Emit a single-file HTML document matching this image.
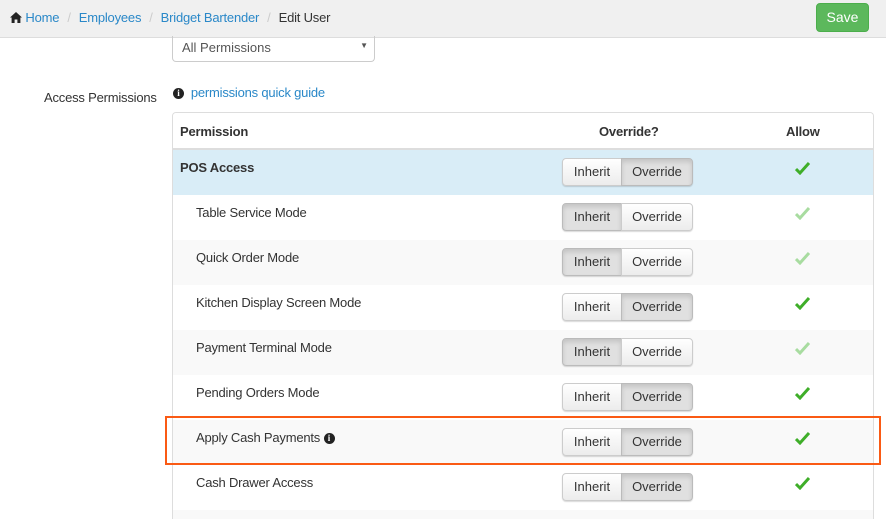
<!DOCTYPE html>
<html><head><meta charset="utf-8"><style>
*{box-sizing:border-box;margin:0;padding:0}
html,body{overflow:hidden;height:519px}
body{width:886px;background:#fff;font-family:"Liberation Sans",sans-serif;font-size:13px;color:#333;position:relative}
.hdr{position:absolute;left:0;top:0;width:886px;height:38px;background:#f0f0f0;border-bottom:1px solid #ddd}
.bc{position:absolute;left:10px;top:10px;font-size:13px;letter-spacing:-0.2px}
.bc a{color:#2a88c8;text-decoration:none}
.bc .s{color:#ccc;margin:0 8px}
.save{position:absolute;left:816px;top:3px;width:53px;height:29px;background:#5cb85c;border:1px solid #4cae4c;border-radius:4px;color:#fff;font-size:14px;text-align:center;line-height:27px}
.sel{position:absolute;left:172px;top:36px;width:203px;height:26px;border:1px solid #ccc;border-top:none;border-radius:0 0 4px 4px;padding:4px 9px;font-size:13px;color:#555}
.sel span{position:absolute;right:6px;top:5px;font-size:8px;color:#555}
.lbl{position:absolute;left:44px;top:90px;letter-spacing:-0.2px}
.qg{position:absolute;left:173px;top:85px;color:#2a88c8;letter-spacing:-0.2px}
.info{display:inline-block;width:11px;height:11px;border-radius:50%;background:#222;color:#fff;font-size:9px;font-weight:bold;text-align:center;line-height:11px;font-family:"Liberation Serif",serif;vertical-align:1px;letter-spacing:0}
.tbl{position:absolute;left:172px;top:112px;width:702px;height:407px;border:1px solid #ddd;border-bottom:none;border-radius:4px 4px 0 0;overflow:hidden}
.row{position:absolute;left:0;width:700px;height:45px;letter-spacing:-0.2px}
.th{font-weight:bold;top:0;height:37px;border-bottom:2px solid #ddd}
.row .n{position:absolute;left:23px;top:10px}
.grp{position:absolute;left:389px;top:8px;height:28px;width:131px;display:flex;border-radius:4px;box-shadow:0 1px 1px rgba(0,0,0,.15);letter-spacing:0}
.grp div{height:28px;border:1px solid #ccc;background:linear-gradient(#fff,#ececec);line-height:26px;text-align:center;font-size:13px;color:#333}
.grp .i{width:60px;border-radius:4px 0 0 4px}
.grp .o{width:72px;border-radius:0 4px 4px 0;margin-left:-1px}
.grp .a{background:#e0e0e0;box-shadow:inset 0 3px 5px rgba(0,0,0,.125);border-color:#bbb}
.chk{position:absolute;left:622px;top:12px}
</style></head><body>
<div class="hdr"><div class="bc"><svg width="12" height="11" viewBox="0 0 12 11" style="vertical-align:-1px"><path d="M6 0L0 5.5h1.6V11h3V7.5h2.8V11h3V5.5H12z" fill="#222"/></svg> <a>Home</a><span class="s">/</span><a>Employees</a><span class="s">/</span><a>Bridget Bartender</a><span class="s">/</span>Edit User</div>
<div class="save">Save</div></div>
<div class="sel">All Permissions<span>▼</span></div>
<div class="lbl">Access Permissions</div>
<div class="qg"><span class="info">i</span>&nbsp; permissions quick guide</div>
<div class="tbl">
<div class="row th" style="background:#fff"><span style="position:absolute;left:7px;top:11px">Permission</span><span style="position:absolute;left:426px;top:11px">Override?</span><span style="position:absolute;left:613px;top:11px">Allow</span></div>
<div class="row" style="top:37px;height:45px;background:#d9edf7"><span class="n" style="left:7px;font-weight:bold">POS Access</span><div class="grp"><div class="i">Inherit</div><div class="o a">Override</div></div><svg class="chk" width="15" height="13" viewBox="0 0 15 13"><path d="M1 7l4 4 9-10" stroke="#3fae29" stroke-width="3" fill="none"/></svg></div>
<div class="row" style="top:82px;background:#fff"><span class="n">Table Service Mode</span><div class="grp"><div class="i a">Inherit</div><div class="o">Override</div></div><svg class="chk" width="15" height="13" viewBox="0 0 15 13"><path d="M1 7l4 4 9-10" stroke="#a8dca0" stroke-width="3" fill="none"/></svg></div>
<div class="row" style="top:127px;background:#f9f9f9"><span class="n">Quick Order Mode</span><div class="grp"><div class="i a">Inherit</div><div class="o">Override</div></div><svg class="chk" width="15" height="13" viewBox="0 0 15 13"><path d="M1 7l4 4 9-10" stroke="#a8dca0" stroke-width="3" fill="none"/></svg></div>
<div class="row" style="top:172px;background:#fff"><span class="n">Kitchen Display Screen Mode</span><div class="grp"><div class="i">Inherit</div><div class="o a">Override</div></div><svg class="chk" width="15" height="13" viewBox="0 0 15 13"><path d="M1 7l4 4 9-10" stroke="#3fae29" stroke-width="3" fill="none"/></svg></div>
<div class="row" style="top:217px;background:#f9f9f9"><span class="n">Payment Terminal Mode</span><div class="grp"><div class="i a">Inherit</div><div class="o">Override</div></div><svg class="chk" width="15" height="13" viewBox="0 0 15 13"><path d="M1 7l4 4 9-10" stroke="#a8dca0" stroke-width="3" fill="none"/></svg></div>
<div class="row" style="top:262px;background:#fff"><span class="n">Pending Orders Mode</span><div class="grp"><div class="i">Inherit</div><div class="o a">Override</div></div><svg class="chk" width="15" height="13" viewBox="0 0 15 13"><path d="M1 7l4 4 9-10" stroke="#3fae29" stroke-width="3" fill="none"/></svg></div>
<div class="row" style="top:307px;background:#f9f9f9"><span class="n">Apply Cash Payments <span class="info">i</span></span><div class="grp"><div class="i">Inherit</div><div class="o a">Override</div></div><svg class="chk" width="15" height="13" viewBox="0 0 15 13"><path d="M1 7l4 4 9-10" stroke="#3fae29" stroke-width="3" fill="none"/></svg></div>
<div class="row" style="top:352px;background:#fff"><span class="n">Cash Drawer Access</span><div class="grp"><div class="i">Inherit</div><div class="o a">Override</div></div><svg class="chk" width="15" height="13" viewBox="0 0 15 13"><path d="M1 7l4 4 9-10" stroke="#3fae29" stroke-width="3" fill="none"/></svg></div>
<div class="row" style="top:397px;height:10px;background:#f9f9f9"></div>
</div>
<div style="position:absolute;left:165px;top:416px;width:716px;height:49px;border:2px solid #fa5a14"></div>
</body></html>
